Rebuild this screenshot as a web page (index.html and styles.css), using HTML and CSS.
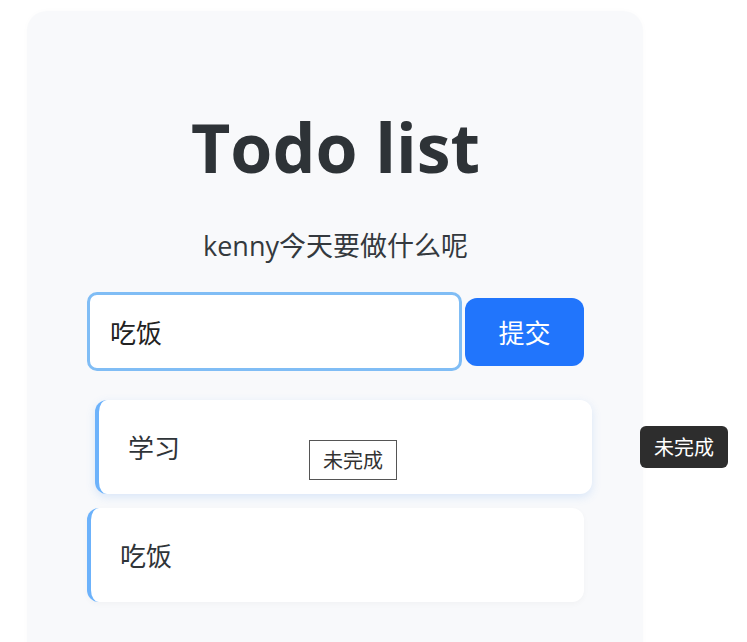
FILE: index.html
```html
<!DOCTYPE html>
<html lang="zh">
<head>
<meta charset="utf-8">
<title>Todo list</title>
<link rel="stylesheet" href="styles.css">
</head>
<body>
<main class="card">
  <h1 class="title">Todo list</h1>
  <p class="subtitle">kenny今天要做什么呢</p>
  <form class="entry">
    <div class="input">吃饭</div>
    <button type="button" class="submit">提交</button>
  </form>
  <ul class="list">
    <li class="item item-hover">
      <span class="item-text">学习</span>
      <span class="status-box">未完成</span>
      <span class="tooltip">未完成</span>
    </li>
    <li class="item">
      <span class="item-text">吃饭</span>
    </li>
  </ul>
</main>
</body>
</html>
```

FILE: styles.css
```css
html, body {
  margin: 0;
  padding: 0;
  background: #ffffff;
}
body {
  font-family: "Open Sans", "Noto Sans CJK SC", sans-serif;
  color: #2f3438;
  overflow: hidden;
  height: 642px;
}
.card {
  box-sizing: border-box;
  width: 616px;
  margin: 11px 0 0 27px;
  padding: 92px 59px 60px 60px;
  background: #f8f9fb;
  border-radius: 20px;
  box-shadow: 0 0 6px rgba(0, 0, 0, 0.02);
  min-height: 700px;
}
.title {
  margin: 0;
  text-align: center;
  font-size: 68px;
  line-height: 88px;
  font-weight: 700;
  color: #2e3337;
}
.subtitle {
  margin: 38px 0 0;
  text-align: center;
  font-size: 27px;
  line-height: 34px;
  color: #34393e;
}
.entry {
  display: flex;
  align-items: center;
  gap: 3px;
  margin: 29px 0 0;
}
.input {
  box-sizing: border-box;
  width: 375px;
  height: 79px;
  border: 3px solid #80bdf5;
  border-radius: 10px;
  background: #ffffff;
  padding: 0 20px;
  display: flex;
  align-items: center;
  font-family: "Noto Sans CJK SC", sans-serif;
  font-size: 26px;
  color: #222;
}
.submit {
  width: 119px;
  height: 68px;
  border: none;
  border-radius: 12px;
  background: #2175fc;
  color: #ffffff;
  font-family: "Noto Sans CJK SC", sans-serif;
  font-size: 26px;
  padding: 0;
}
.list {
  list-style: none;
  margin: 29px 0 0;
  padding: 0;
  display: flex;
  flex-direction: column;
  gap: 14px;
}
.item {
  position: relative;
  box-sizing: border-box;
  width: 497px;
  height: 94px;
  background: #ffffff;
  border-left: 4px solid #6cb2fb;
  border-radius: 12px;
  padding: 0 29px;
  display: flex;
  align-items: center;
  box-shadow: 0 2px 6px rgba(0, 0, 0, 0.03);
  font-family: "Noto Sans CJK SC", sans-serif;
  font-size: 26px;
  color: #2f3438;
}
.item-hover {
  transform: translateX(8px);
  box-shadow: 0 3px 10px rgba(80, 150, 240, 0.18);
}
.item-text {
  line-height: 1;
}
.status-box {
  position: absolute;
  left: 210px;
  top: 40px;
  box-sizing: border-box;
  width: 88px;
  height: 40px;
  border: 1px solid #555;
  background: #ffffff;
  font-size: 20px;
  line-height: 38px;
  text-align: center;
  color: #333;
}
.tooltip {
  position: absolute;
  left: 541px;
  top: 26px;
  box-sizing: border-box;
  width: 88px;
  height: 42px;
  border-radius: 6px;
  background: #2d2d2d;
  color: #ffffff;
  font-size: 20px;
  line-height: 42px;
  text-align: center;
}
```
